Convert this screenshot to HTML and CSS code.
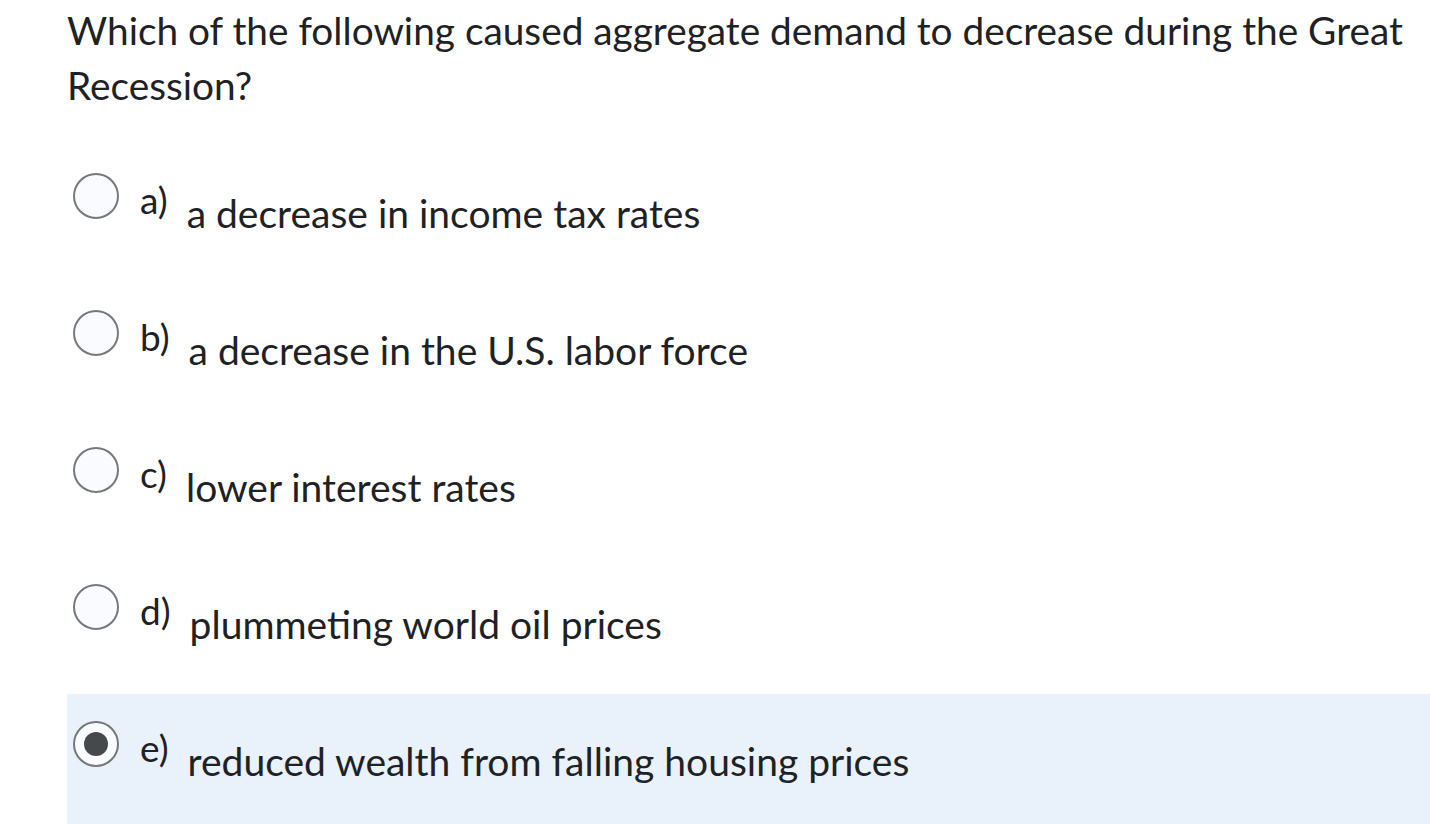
FILE: index.html
```html
<!DOCTYPE html>
<html>
<head>
<meta charset="utf-8">
<link rel="stylesheet" href="styles.css">
</head>
<body>
<div class="page">
  <p class="question">Which of the following caused aggregate demand to decrease during the Great Recession?</p>
  <div class="options">
    <div class="option">
      <span class="radio"></span>
      <span class="label">a)</span>
      <span class="text">a decrease in income tax rates</span>
    </div>
    <div class="option">
      <span class="radio"></span>
      <span class="label">b)</span>
      <span class="text">a decrease in the U.S. labor force</span>
    </div>
    <div class="option">
      <span class="radio"></span>
      <span class="label">c)</span>
      <span class="text">lower interest rates</span>
    </div>
    <div class="option">
      <span class="radio"></span>
      <span class="label">d)</span>
      <span class="text">plummeting world oil prices</span>
    </div>
    <div class="option selected">
      <span class="radio checked"></span>
      <span class="label">e)</span>
      <span class="text">reduced wealth from falling housing prices</span>
    </div>
  </div>
</div>
</body>
</html>
```

FILE: styles.css
```css
html, body {
  margin: 0;
  padding: 0;
  background: #ffffff;
}
body {
  font-family: Lato, "Noto Sans", sans-serif;
  color: #1f2225;
}
.page {
  padding: 3px 0 0 67px;
}
.question {
  margin: 0;
  font-size: 38.8px;
  line-height: 55px;
  padding-right: 10px;
}
.options {
  margin-top: 33px;
  display: flex;
  flex-direction: column;
  gap: 7px;
}
.option {
  height: 130px;
  display: flex;
  align-items: flex-start;
  box-sizing: border-box;
  padding: 27px 0 0 6px;
}
.option.selected {
  background: #e9f1fb;
}
.radio {
  width: 46px;
  height: 46px;
  box-sizing: border-box;
  border: 2px solid #76797c;
  border-radius: 50%;
  background: #f9fbff;
  flex: none;
  display: flex;
  align-items: center;
  justify-content: center;
}
.radio.checked::after {
  content: "";
  width: 24px;
  height: 24px;
  border-radius: 50%;
  background: #46494c;
}
.label {
  font-size: 37px;
  line-height: 40px;
  margin-left: 21px;
  margin-top: 7px;
}
.text {
  font-size: 39px;
  line-height: 40px;
  margin-left: 19px;
  margin-top: 20px;
}
```
